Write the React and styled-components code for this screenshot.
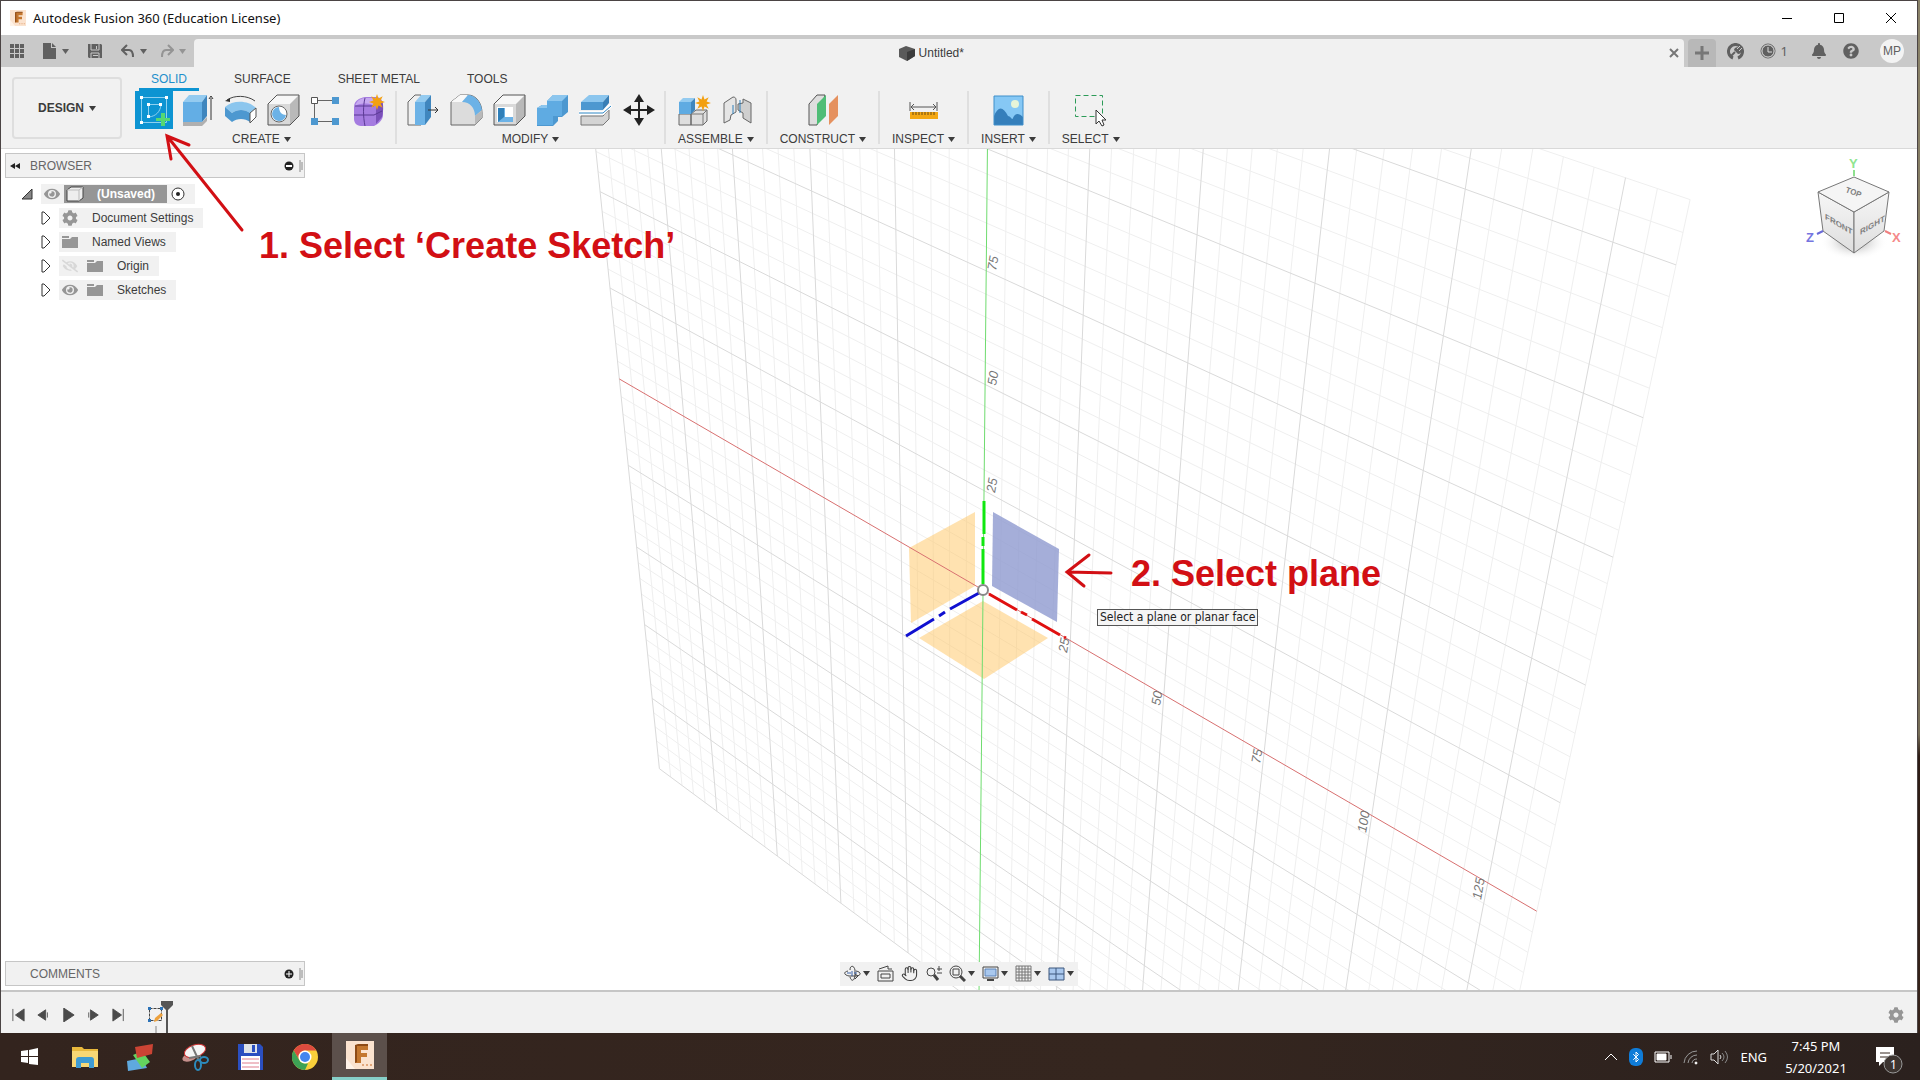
import React from 'react'
import styled, { createGlobalStyle } from 'styled-components'
import { Bluetooth, Hand } from 'lucide-react'
import { FaBell, FaCog, FaEye, FaEyeSlash, FaQuestionCircle } from 'react-icons/fa'

const colors = {
  chrome: '#f1f1f1',
  tabBar: '#c9c9c9',
  icon: '#606060',
  text: '#3c3c3c',
  accent: '#0d94d2',
  blue: '#6cb2e6',
  blueDark: '#4d98d0',
  note: '#d20f14',
}

const uiFont = '"Liberation Sans", Arial, sans-serif'
const systemFont = '"Noto Sans", "Open Sans", sans-serif'

const GlobalStyle = createGlobalStyle`
  * {
    box-sizing: border-box;
  }
  body {
    margin: 0;
    font-family: ${uiFont};
    font-size: 12px;
    color: ${colors.text};
  }
  button {
    border: 0;
    padding: 0;
    background: none;
    font: inherit;
    color: inherit;
  }
  svg {
    display: block;
    flex: none;
  }
`

const Desktop = styled.div`
  position: relative;
  height: 100vh;
  display: flex;
  flex-direction: column;
  overflow: hidden;
  background: linear-gradient(#8a8268 0, #756c56 68%, #2e1c15 70%, #38251c 100%);
`
const Window = styled.div`
  flex: 1;
  min-height: 0;
  display: flex;
  flex-direction: column;
  margin-right: 2px;
  border: 1px solid #4b4444;
  border-bottom: 0;
  background: #fff;
`
const TitleBar = styled.header`
  display: flex;
  align-items: center;
  height: 34px;
  padding: 0 20px 0 9px;
  gap: 7px;
  color: #111;
`
const Title = styled.h1`
  flex: 1;
  margin: 0;
  font: 400 13px ${systemFont};
`
const WindowButtons = styled.div`
  display: flex;
  gap: 40px;
`
const TabBar = styled.div`
  display: flex;
  height: 32px;
  background: ${colors.tabBar};
`
const QuickBar = styled.div`
  display: flex;
  align-items: center;
  width: 193px;
  padding-left: 9px;
  color: ${colors.icon};
`
const QuickButton = styled.button`
  display: flex;
  align-items: center;
  gap: 5px;
  margin-right: ${(props) => props.$after || 18}px;
  opacity: ${(props) => (props.$dim ? 0.5 : 1)};
`
const DocumentTab = styled.div`
  flex: 1;
  display: flex;
  align-items: center;
  margin-top: 4px;
  padding-right: 5px;
  border-radius: 4px 4px 0 0;
  background: ${colors.chrome};
`
const DocumentName = styled.div`
  flex: 1;
  display: flex;
  justify-content: center;
  align-items: center;
  gap: 4px;
  font-size: 12px;
`
const NewTab = styled.button`
  display: grid;
  place-items: center;
  width: 28px;
  margin: 4px 0 0 4px;
  border-radius: 4px 4px 0 0;
  background: #b8b8b8;
  color: #777;
`
const AccountBar = styled.div`
  display: flex;
  align-items: center;
  padding: 0 13px 0 11px;
  color: ${colors.icon};
`
const AccountButton = styled.button`
  display: flex;
  align-items: center;
  gap: 4px;
  margin-right: ${(props) => props.$after || 16}px;
  font: 13px ${systemFont};
`
const Avatar = styled.button`
  width: 24px;
  height: 24px;
  border-radius: 50%;
  background: #f3f3f3;
`
const Ribbon = styled.div`
  display: flex;
  height: 82px;
  border-bottom: 1px solid #d9d9d9;
  background: ${colors.chrome};
`
const WorkspaceButton = styled.button`
  display: flex;
  justify-content: center;
  align-items: center;
  gap: 5px;
  width: 110px;
  height: 62px;
  margin: 10px 13px 0 11px;
  border: 2px solid #dedede;
  border-radius: 4px;
  font-weight: 700;
`
const RibbonMain = styled.div`
  flex: 1;
`
const RibbonTabs = styled.nav`
  display: flex;
  gap: 23px;
  height: 24px;
  padding-left: 4px;
`
const RibbonTab = styled.button`
  height: 24px;
  padding: 2px 12px 0;
  border-bottom: 3px solid ${(props) => (props.$active ? colors.accent : 'transparent')};
  color: ${(props) => (props.$active ? '#1e8fcb' : colors.text)};
`
const Groups = styled.div`
  display: flex;
`
const Group = styled.section`
  display: flex;
  flex-direction: column;
  align-items: center;
  padding: 0 7px;
  height: 53px;
  border-right: ${(props) => (props.$last ? 0 : 2)}px solid #dfdfdf;

  &:first-child {
    padding-left: 0;
  }
`
const Tools = styled.div`
  display: flex;
  gap: 5px;
`
const Tool = styled.button`
  display: grid;
  place-items: center;
  width: 38px;
  height: 38px;
  background: ${(props) => (props.$active ? colors.accent : 'transparent')};
`
const GroupLabel = styled.button`
  display: flex;
  align-items: center;
  gap: 4px;
  height: 18px;
  margin-top: 1px;
  padding: 2px 5px 0;
  white-space: nowrap;
`
const Canvas = styled.main`
  position: relative;
  flex: 1;
  min-height: 0;
  display: flex;
  flex-direction: column;
  justify-content: space-between;
  overflow: hidden;
`
const Scene = styled.svg`
  position: absolute;
  inset: 0;
  width: 100%;
  height: 100%;
`
const Panel = styled.aside`
  position: relative;
  width: 300px;
  margin: 4px;
`
const PanelHeader = styled.div`
  display: flex;
  align-items: center;
  height: 25px;
  padding: 0 1px 0 3px;
  border: 1px solid #c6c6c6;
  background: ${colors.chrome};
  color: #666;
`
const PanelTitle = styled.span`
  flex: 1;
  padding-left: ${(props) => (props.$indent ? 21 : 9)}px;
`
const Tree = styled.ul`
  display: flex;
  flex-direction: column;
  gap: 4px;
  margin: 6px 0 0;
  padding: 0;
  list-style: none;
`
const TreeRow = styled.li`
  display: flex;
  align-items: center;
  gap: 8px;
  padding-left: ${(props) => (props.$root ? 16 : 36)}px;
`
const TreeItem = styled.div`
  display: flex;
  align-items: center;
  gap: ${(props) => (props.$root ? 4 : 9)}px;
  height: 20px;
  padding: 0 10px 0 3px;
  background: ${colors.chrome};
  color: #969696;
`
const TreeLabel = styled.span`
  padding-left: 5px;
  color: ${colors.text};
`
const Selected = styled.strong`
  display: flex;
  align-items: center;
  gap: 13px;
  height: 18px;
  padding: 0 12px 0 2px;
  background: #969696;
  color: #fff;
`
const BottomRow = styled.div`
  position: relative;
  display: grid;
  grid-template-columns: 1fr auto 1fr;
  align-items: center;
`
const NavBar = styled.div`
  display: flex;
  align-items: center;
  gap: 7px;
  height: 24px;
  padding: 0 4px;
  background: ${colors.chrome};
`
const NavButton = styled.button`
  display: flex;
  align-items: center;
  gap: 2px;
`
const Timeline = styled.div`
  display: flex;
  align-items: center;
  height: 43px;
  padding: 0 13px 0 11px;
  border-top: 2px solid #c6c6c6;
  background: ${colors.chrome};
  color: #4a4a4a;
`
const Playback = styled.div`
  flex: 1;
  display: flex;
  align-items: center;
  gap: 12px;
`
const PlayButton = styled.button`
  padding-top: 5px;
`
const Taskbar = styled.footer`
  display: flex;
  justify-content: space-between;
  height: 47px;
  background: linear-gradient(90deg, #33241e, #35261f 60%, #2b211e);
  color: #fff;
  font-family: ${systemFont};
`
const TaskGroup = styled.div`
  display: flex;
  align-items: center;
  padding-left: 2px;
`
const TaskButton = styled.button`
  display: grid;
  place-items: center;
  width: 55px;
  height: 47px;
  border-bottom: ${(props) => (props.$active ? '3px solid #86cfc8' : 0)};
  background: ${(props) => (props.$active ? '#5c504b' : 'transparent')};
`
const Tray = styled.div`
  display: flex;
  align-items: center;
  gap: 11px;
  padding-right: 11px;
  font-size: 13px;
`
const Clock = styled.time`
  width: 76px;
  text-align: center;
  line-height: 22px;
`
const Notes = styled.svg`
  position: absolute;
  inset: 0;
  width: 100%;
  height: 100%;
  pointer-events: none;
  fill: none;
  stroke: ${colors.note};
  stroke-width: 3;
  stroke-linecap: round;

  text {
    fill: ${colors.note};
    stroke: none;
    font: 700 36px ${uiFont};
  }
`

const Caret = ({ color = 'currentColor' }) => (
  <svg width='7' height='5' viewBox='0 0 7 5'>
    <path d='M0 0h7L3.5 5z' fill={color} />
  </svg>
)

const FusionLogo = ({ size }) => (
  <svg width={size} height={size} viewBox='0 0 28 28'>
    <rect width='28' height='28' fill='#fbe3cf' />
    <path d='M0 28V17l9 11z' fill='#fff3e8' />
    <path d='M9 4h13v5h-7v3h6v4h-6v6H9z' fill='#c4772f' />
    <path d='M9 4l3-1h10v2H11v16l-2 1z' fill='#8e4b16' />
    <path d='M16 24h2M20 24h2M24 24h2' stroke='#e2a77b' strokeWidth='2' />
  </svg>
)

// Isometric block shared by several of the modelling tools
const Block = ({ front = '#d9d9d9', top = '#f7f7f7', side = '#b9b9b9', stroke = '#555' }) => (
  <g stroke={stroke} strokeLinejoin='round'>
    <path d='M1 10h22v21H1z' fill={front} stroke='none' />
    <path d='M1 10L10 1h22l-9 9z' fill={top} stroke='none' />
    <path d='M23 10l9-9v21l-9 9z' fill={side} stroke='none' />
    <path d='M1 10L10 1h22v21l-9 9H1z' fill='none' />
  </g>
)

const Icon = ({ children, size = 33 }) => (
  <svg width={size} height={size} viewBox='0 0 33 33' fill='none'>
    {children}
  </svg>
)

const Burst = ({ x, y }) => (
  <path
    transform={`translate(${x} ${y})`}
    d='M0-8l1.5 4.4L5.7-5.7 3.6-1.5 8 0 3.6 1.5l2.1 4.2-4.2-2.1L0 8l-1.5-4.4-4.2 2.1 2.1-4.2L-8 0l4.4-1.5-2.1-4.2 4.2 2.1z'
    fill='#f3a010'
  />
)

const SketchIcon = () => (
  <Icon>
    <path d='M3.500 3.500h25v25h-25zM10.500 10.500h12M10.500 10.500v12M23 11c-1 7-5 11-12 12' stroke='#8fd0f0' />
    <path d='M2 2h3v3H2zM27 2h3v3h-3zM2 27h3v3H2zM9 9h3v3H9zM21 9h3v3h-3zM9 21h3v3H9z' fill='#fff' />
    <path d='M23 19h4v5h5v3h-5v5h-4v-5h-5v-3h5z' fill='#55d873' />
  </Icon>
)
const ExtrudeIcon = () => (
  <Icon>
    <path d='M2 28h19l5-5v4l-5 5H2z' fill='#b0b0b0' />
    <path d='M2 8h19v20H2z' fill='#63aee5' />
    <path d='M2 8l6-7h18l-5 7z' fill='#94cbf0' />
    <path d='M21 8l5-7v21l-5 6z' fill='#3f86be' />
    <path d='M30 26V4M28 5l2-3 2 3' stroke='#333' />
  </Icon>
)
const RevolveIcon = () => (
  <Icon>
    <path d='M3 6C10 1 23 1 31 7' stroke='#444' />
    <path d='M1 7l5-3v4z' fill='#333' />
    <path d='M1 13c8-7 23-7 31 1l-6 5c-5-4-13-4-18 0z' fill='#8cc6ee' />
    <path d='M1 13l7 6v9l-7-6zM8 19c5-4 13-4 18 0v9c-5-4-13-4-18 0z' fill={colors.blueDark} />
    <path d='M26 19l6-5v9l-6 6z' fill='#fff' stroke='#555' />
  </Icon>
)
const HoleIcon = () => (
  <Icon>
    <Block />
    <circle cx='12' cy='20' r='8' fill='#fff' stroke='#666' />
    <path d='M12 13a7 7 0 1 0 7 8c-4 0-7-3-7-8z' fill={colors.blue} />
  </Icon>
)
const PatternIcon = () => (
  <Icon>
    <path d='M4.500 9v16M8 6.500h16M8 27.500h16' stroke='#666' />
    <path d='M1.500 3.500h6v6h-6z' fill='#fff' stroke='#555' />
    <path d='M22 3h7v7h-7zM1 24h7v7H1zM22 24h7v7h-7z' fill={colors.blueDark} />
  </Icon>
)
const FormIcon = () => (
  <Icon>
    <path d='M1 13c0-6 5-9 11-10h11c5 0 7 4 7 9v9c0 4-4 9-9 11H8c-5 0-7-4-7-7z' fill='#a57ce0' />
    <path d='M2 12c2-6 6-8 11-8h10l-3 7c-7-2-12-2-18 1z' fill='#c6a9f0' />
    <path d='M23 11l6-4c2 5 1 12 0 16l-6 7z' fill='#7a50b8' />
    <path d='M1 21h20l8-4M12 4c-2 8-2 18 0 28M2 12h19' stroke='#5b3a94' />
    <Burst x='24' y='8' />
  </Icon>
)
const PressPullIcon = () => (
  <Icon>
    <path d='M1 8l7-7h6v30H1z' fill='#efefef' stroke='#666' />
    <path d='M8 8h10v23H8z' fill={colors.blue} />
    <path d='M8 8l6-7h10l-6 7z' fill='#94cbf0' />
    <path d='M18 8l6-7v22l-6 8z' fill='#3f86be' />
    <path d='M21 16h10M28 13l3 3-3 3' stroke='#333' />
  </Icon>
)
const FilletIcon = () => (
  <Icon>
    <path d='M1 8l9-7h8c8 0 14 8 14 18v5l-7 7H1z' fill='#dcdcdc' stroke='#666' />
    <path d='M1 8l9-7h8l-6 7z' fill='#f8f8f8' />
    <path d='M12 8l6-7c7 0 13 7 14 15l-7 6c0-8-5-14-13-14z' fill={colors.blue} />
    <path d='M25 22l7-6v8l-7 7z' fill='#b9b9b9' />
  </Icon>
)
const ShellIcon = () => (
  <Icon>
    <Block />
    <path d='M4 13h16v15H4z' fill='#fff' />
    <path d='M5 14h7v9h8v5H5z' fill={colors.blue} />
    <path d='M5 14l6 0v9l-6 5z' fill='#2f7fb9' />
  </Icon>
)
const CombineIcon = () => (
  <Icon>
    <path d='M1 14l5-3h5V7l6-6h15v17l-6 5h-4v4l-5 5H1z' fill={colors.blueDark} />
    <path d='M1 14h10V7h15v15H17v9H1z' fill='#5fabe2' />
    <path d='M11 7l6-6h15l-6 6zM1 14l5-3h5v3z' fill='#8cc6ee' />
  </Icon>
)
const SplitIcon = () => (
  <Icon>
    <path d='M2 8l8-7h20l-6 7z' fill='#8cc6ee' />
    <path d='M2 8h22v8H2z' fill={colors.blueDark} />
    <path d='M24 8l6-7v8l-6 7z' fill='#397fb6' />
    <path d='M2 22h22l6-6v9l-6 6H2z' fill='#d4d4d4' stroke='#777' />
    <path d='M0 19h24l8-8' stroke='#fff' strokeWidth='4' />
    <path d='M0 19h24l8-7' stroke='#2f87c4' />
  </Icon>
)
const MoveIcon = () => (
  <Icon>
    <path d='M17 5v22M6 16h22' stroke='#222' strokeWidth='2' />
    <path d='M17 0l5 8H12zM17 32l5-8H12zM1 16l8-5v10zM33 16l-8-5v10z' fill='#222' />
  </Icon>
)
const ComponentIcon = () => (
  <Icon>
    <path d='M1 20h12v11H1zM13 20l5-4h11v11l-4 4H13z' fill='#dedede' stroke='#666' />
    <path d='M13 20h12v11M25 20l4-4' stroke='#777' />
    <path d='M1 8h12v12H1z' fill='#5fabe2' />
    <path d='M1 8l4-4h12l-4 4z' fill='#94cbf0' />
    <path d='M13 8l4-4v12l-4 4z' fill='#3f86be' />
    <Burst x='25' y='9' />
  </Icon>
)
const JointIcon = () => (
  <Icon>
    <path d='M3 9l9-6c2 0 3 1 3 3v12l-5 3-1 5-6 3z' fill='#e5e5e5' stroke='#666' />
    <path d='M30 29l-8-5v-5l-5-3v-6l5-1V5l8 4z' fill='#cfcfcf' stroke='#666' />
    <path d='M12 20v-9M19 19V6' stroke='#2f7fb9' />
  </Icon>
)
const ConstructIcon = () => (
  <Icon>
    <path d='M3 10l8-9h8L11 31H3z' fill='#dedede' stroke='#555' />
    <path d='M11 10l9-9v21l-9 9z' fill='#4fbd76' />
    <path d='M23 10l9-9v21l-9 9z' fill='#e5915f' />
  </Icon>
)
const InspectIcon = () => (
  <Icon>
    <path d='M3 8v9M30 8v9M4 13h25M7 10l-3 3 3 3M26 10l3 3-3 3' stroke='#555' />
    <path d='M3 18h28v7H3z' fill='#f3a712' />
    <path d='M6 18v3M9 18v3M12 18v3M15 18v3M18 18v3M21 18v3M24 18v3M27 18v3' stroke='#6b4b10' />
  </Icon>
)
const InsertIcon = () => (
  <Icon>
    <path d='M2 2h29v29H2z' fill='#86c8f5' />
    <path d='M2 22c4-10 9-10 14 0 3 0 4 5 5 2 2-5 6-5 10-1v8H2z' fill='#357fbb' />
    <circle cx='23' cy='10' r='4' fill='#e7f5d9' />
    <path d='M2 2h29v29H2z' stroke='#3f8fca' />
  </Icon>
)
const SelectIcon = () => (
  <Icon>
    <path d='M1.500 1.500h27v21h-27z' stroke='#2d9b58' strokeDasharray='5 3' />
    <path d='M22 16v14l3-3 3 5 2-1-2-5h4z' fill='#fff' stroke='#333' />
  </Icon>
)

const groups = [
  {
    label: 'CREATE',
    tools: [
      ['Create Sketch', SketchIcon],
      ['Extrude', ExtrudeIcon],
      ['Revolve', RevolveIcon],
      ['Hole', HoleIcon],
      ['Pattern', PatternIcon],
      ['Create Form', FormIcon],
    ],
  },
  {
    label: 'MODIFY',
    tools: [
      ['Press Pull', PressPullIcon],
      ['Fillet', FilletIcon],
      ['Shell', ShellIcon],
      ['Combine', CombineIcon],
      ['Split Body', SplitIcon],
      ['Move', MoveIcon],
    ],
  },
  {
    label: 'ASSEMBLE',
    tools: [
      ['New Component', ComponentIcon],
      ['Joint', JointIcon],
    ],
  },
  { label: 'CONSTRUCT', tools: [['Offset Plane', ConstructIcon]] },
  { label: 'INSPECT', tools: [['Measure', InspectIcon]] },
  { label: 'INSERT', tools: [['Insert Image', InsertIcon]] },
  { label: 'SELECT', tools: [['Select', SelectIcon]] },
]

const UndoArrow = ({ flip }) => (
  <svg width='14' height='14' viewBox='0 0 14 14' fill='none' stroke='currentColor' strokeWidth='2'>
    <g transform={flip ? 'translate(14 0) scale(-1 1)' : undefined}>
      <path d='M1 6h7c3 0 4 2 4 7M6 1L1 6l5 5' />
    </g>
  </svg>
)

const FolderIcon = () => (
  <svg width='16' height='14' viewBox='0 0 16 14' fill='currentColor'>
    <path d='M0 1h7v2H0zM0 4h8l2-2h6v11H0z' />
  </svg>
)

const Expander = () => (
  <svg width='10' height='14' viewBox='0 0 10 14'>
    <path d='M1 1h2l6 6-6 6H1z' fill='#fff' stroke='#333' />
  </svg>
)

const Grip = () => (
  <svg width='4' height='12' viewBox='0 0 4 12'>
    <path d='M1 0v12M3 2v8' stroke='#888' />
  </svg>
)

// Ground grid, projected with a fixed camera
const gridMin = -125
const gridMax = 135
const project = (x, y) => {
  const w = 1 - 0.0013 * x - 0.00127 * y
  return [(983 + 2.104 * x - 1.21 * y) / w, (590 + 1.195 * x - 4.6 * y) / w]
}
const segment = (from, to) => {
  const [x1, y1] = project(...from)
  const [x2, y2] = project(...to)
  return `M${x1.toFixed(1)} ${y1.toFixed(1)}L${x2.toFixed(1)} ${y2.toFixed(1)}`
}
const steps = []
for (let i = gridMin; i <= gridMax; i += 5) steps.push(i)
const gridPath = (list) =>
  list.map((i) => segment([i, gridMin], [i, gridMax]) + segment([gridMin, i], [gridMax, i])).join('')
const minorGrid = gridPath(steps.filter((i) => i % 25 !== 0))
const majorGrid = gridPath(steps.filter((i) => i % 25 === 0 && i !== 0))

const gridLabels = [
  ['25', 995, 493],
  ['50', 996, 386],
  ['75', 996, 271],
  ['25', 1067, 653],
  ['50', 1160, 706],
  ['75', 1260, 764],
  ['100', 1366, 833],
  ['125', 1481, 900],
]

function Viewport() {
  return (
    <Scene viewBox='1 149 1916 841' preserveAspectRatio='xMidYMid slice' fill='none'>
      <defs>
        <linearGradient id='cubeFace' x1='0' y1='0' x2='0' y2='1'>
          <stop offset='0' stopColor='#f6f6f6' />
          <stop offset='1' stopColor='#dedede' />
        </linearGradient>
        <radialGradient id='cubeShadow'>
          <stop offset='0' stopColor='#999' />
          <stop offset='1' stopColor='#fff' stopOpacity='0' />
        </radialGradient>
      </defs>
      <path d={minorGrid} stroke='#efefef' />
      <path d={majorGrid} stroke='#dadada' />
      <g fill='#ffc868' fillOpacity='0.52'>
        <path d='M975 512L909 548L911 623L975 586z' />
        <path d='M983 601L1048 638L984 679L919 638z' />
      </g>
      <path d='M993 512L1059 549L1057 622L992 586z' fill='#8f9ad0' fillOpacity='0.8' />
      <path d={segment([gridMin, 0], [gridMax, 0])} stroke='#d87070' />
      <path d={segment([0, gridMin], [0, gridMax])} stroke='#6fdc6f' />
      <g strokeWidth='3'>
        <path d='M984 501V534M983 537V546M983 549V584' stroke='#10e810' />
        <path d='M979 593L950 609M945 612L939 616M934 619L906 636' stroke='#1010d0' />
        <path d='M989 594L1017 610M1021 612L1027 615M1032 619L1060 635M1064 637L1066 638' stroke='#e01010' />
      </g>
      <circle cx='983' cy='590' r='5' fill='#fff' stroke='#888' strokeWidth='2' />
      <g fill='#777' fontFamily='Liberation Sans, sans-serif' fontSize='13' fontStyle='italic'>
        {gridLabels.map(([text, x, y]) => (
          <text key={`${text}-${x}`} transform={`translate(${x} ${y}) rotate(-80)`}>
            {text}
          </text>
        ))}
      </g>
      <ellipse cx='1854' cy='242' rx='34' ry='18' fill='url(#cubeShadow)' />
      <g stroke='#777' fill='url(#cubeFace)'>
        <path d='M1818 192L1854 212V253L1823 231z' />
        <path d='M1889 192L1854 212V253L1884 231z' />
        <path d='M1854 177L1889 192L1854 212L1818 192z' fill='#f5f5f5' />
      </g>
      <g fill='#808080' fontFamily='Liberation Sans, sans-serif' fontSize='8' fontWeight='700'>
        <text transform='translate(1825 219) skewY(30)'>FRONT</text>
        <text transform='translate(1860 235) skewY(-30)'>RIGHT</text>
        <text transform='translate(1845 192) rotate(20)'>TOP</text>
      </g>
      <g strokeWidth='2'>
        <path d='M1854 170V176' stroke='#8ee08e' />
        <path d='M1817 234L1823 231' stroke='#6a6ad8' />
        <path d='M1885 231L1891 234' stroke='#f08080' />
      </g>
      <g fontFamily='Liberation Sans, sans-serif' fontSize='13' fontWeight='700'>
        <text x='1849' y='168' fill='#8fe58f'>Y</text>
        <text x='1806' y='242' fill='#7575e0'>Z</text>
        <text x='1892' y='242' fill='#f58a8a'>X</text>
      </g>
    </Scene>
  )
}

const Tooltip = styled.div`
  position: absolute;
  left: 1096px;
  top: 460px;
  height: 17px;
  padding: 0 2px;
  border: 1px solid #555;
  background: #f5f5f5;
  color: #222;
  font: 12px/15px 'DejaVu Sans Condensed', 'DejaVu Sans', sans-serif;
  white-space: nowrap;
`

const NavIcon = ({ children }) => (
  <svg width='17' height='17' viewBox='0 0 17 17' fill='none' stroke='#444'>
    {children}
  </svg>
)

const navTools = [
  ['Orbit', true, (
    <NavIcon>
      <path d='M6 5c0-5 4-5 5 0v6c-1 6-4 5-5 1M12 6c6 1 5 5 0 5H5C0 10-1 7 4 6M11 9l3 2-3 3' />
      <path d='M3 8h4M8 6v5M10 8h3' stroke='#3a62a8' />
    </NavIcon>
  )],
  ['Look At', false, (
    <NavIcon>
      <path d='M1 6h15v10H1zM4 9h9v4H4zM2 4l9-3v3h4' />
    </NavIcon>
  )],
  ['Pan', false, <Hand size={17} strokeWidth={1.5} />],
  ['Zoom', false, (
    <NavIcon>
      <circle cx='6' cy='7' r='4' />
      <path d='M9 10l4 5' strokeWidth='3' />
      <path d='M12 4h5M14 1v5M12 8h5' />
    </NavIcon>
  )],
  ['Fit', true, (
    <NavIcon>
      <circle cx='7' cy='7' r='6' />
      <path d='M4 4h6v6H4z' />
      <path d='M11 11l5 5' strokeWidth='3' />
    </NavIcon>
  )],
  ['Display Settings', true, (
    <NavIcon>
      <path d='M1 2h15v11H1z' />
      <path d='M3 4h11v7H3z' fill='#a9c8ee' stroke='#5b82b8' />
      <path d='M5 15h7' strokeWidth='2' />
    </NavIcon>
  )],
  ['Grid and Snaps', true, (
    <NavIcon>
      <path d='M1 1h15v15H1zM4 1v15M7 1v15M10 1v15M13 1v15M1 4h15M1 7h15M1 10h15M1 13h15' stroke='#777' />
    </NavIcon>
  )],
  ['Viewports', true, (
    <NavIcon>
      <path d='M1 3h15v12H1zM8 3v12M1 9h15' fill='#a9c8ee' stroke='#3d567c' />
    </NavIcon>
  )],
]

const playbackIcons = [
  ['To start', 'M1 1v14M14 1v14L4 8z'],
  ['Step back', 'M12 5v6M10 2v12L1 8z'],
  ['Play', 'M2 0v16l12-8z'],
  ['Step forward', 'M2 5v6M4 2v12l9-6z'],
  ['To end', 'M13 1v14M1 1v14l10-7z'],
]

const WindowsIcon = () => (
  <svg width='17' height='17' viewBox='0 0 17 17' fill='#fff'>
    <path d='M0 3l7-1v6H0zM8 2l9-2v8H8zM0 9h7v6l-7-1zM8 9h9v8l-9-1z' />
  </svg>
)
const ExplorerIcon = () => (
  <svg width='26' height='22' viewBox='0 0 26 22'>
    <path d='M0 1h10l2 2h14v18H0z' fill='#e9b83c' />
    <path d='M0 5h26v16H0z' fill='#f8d775' />
    <path d='M4 22v-8q0-3 3-3h12q3 0 3 3v8h-5v-5H9v5z' fill='#3e9bd3' />
  </svg>
)
const CardsIcon = () => (
  <svg width='28' height='28' viewBox='0 0 28 28'>
    <path d='M1 18l15-3 5 10-19 3z' fill='#5fa9de' />
    <path d='M7 12l9-4 8 11-8 6z' fill='#63d35e' />
    <path d='M9 4l18-3-1 10-15 4z' fill='#cb4434' />
  </svg>
)
const SnipIcon = () => (
  <svg width='28' height='28' viewBox='0 0 28 28' fill='none'>
    <ellipse cx='9' cy='14' rx='8' ry='4' fill='#c6908c' transform='rotate(-20 9 14)' />
    <ellipse cx='14' cy='8' rx='11' ry='6' fill='#f5f5f5' stroke='#c33' transform='rotate(-18 14 8)' />
    <path d='M11 3l7 15M8 15l12-2' stroke='#777' strokeWidth='2' />
    <ellipse cx='17' cy='22' rx='3' ry='5' stroke='#2c8bbd' strokeWidth='2' />
    <ellipse cx='23' cy='17' rx='4' ry='3' stroke='#2c8bbd' strokeWidth='2' />
  </svg>
)
const FloppyIcon = () => (
  <svg width='26' height='26' viewBox='0 0 26 26'>
    <path d='M1 0h22l3 3v23H1z' fill='#2b4fc0' />
    <path d='M7 0h13v9H7z' fill='#dfe3e8' />
    <path d='M15 1h3v7h-3z' fill='#2b4fc0' />
    <path d='M4 12h19v14H4z' fill='#fff' />
    <path d='M5 15h17M5 19h17M5 23h17' stroke='#df7f8c' />
  </svg>
)
const ChromeIcon = () => (
  <svg width='26' height='26' viewBox='0 0 26 26'>
    <circle cx='13' cy='13' r='13' fill='#f9cf3a' />
    <path d='M1.7 6.5A13 13 0 0 1 24.3 6.5H13a6.5 6.5 0 0 0-5.6 9.7z' fill='#dd4b3e' />
    <path d='M1.7 6.5L7.4 16.3A6.5 6.5 0 0 0 13 19.5h3L13 26A13 13 0 0 1 1.7 6.5z' fill='#3da255' />
    <circle cx='13' cy='13' r='6.5' fill='#fff' />
    <circle cx='13' cy='13' r='5' fill='#4386ee' />
  </svg>
)

const taskIcons = [
  ['File Explorer', <ExplorerIcon />],
  ['Solitaire', <CardsIcon />],
  ['Snipping Tool', <SnipIcon />],
  ['Commander', <FloppyIcon />],
  ['Chrome', <ChromeIcon />],
  ['Fusion 360', <FusionLogo size={28} />],
]

export default function App() {
  return (
    <Desktop>
      <GlobalStyle />
      <Window>
        <TitleBar>
          <FusionLogo size={16} />
          <Title>Autodesk Fusion 360 (Education License)</Title>
          <WindowButtons>
            <button aria-label='Minimize'>
              <svg width='12' height='12' stroke='#000'><path d='M1 6.5h10' /></svg>
            </button>
            <button aria-label='Maximize'>
              <svg width='12' height='12' stroke='#000' fill='none'><path d='M1.5 1.5h9v9h-9z' /></svg>
            </button>
            <button aria-label='Close'>
              <svg width='12' height='12' stroke='#000'><path d='M1 1l10 10M11 1L1 11' /></svg>
            </button>
          </WindowButtons>
        </TitleBar>

        <TabBar>
          <QuickBar>
            <QuickButton aria-label='Data panel'>
              <svg width='15' height='15' viewBox='0 0 15 15' fill='currentColor'>
                <path d='M0 0h4v4H0zM5 0h4v4H5zM10 0h4v4h-4zM0 5h4v4H0zM5 5h4v4H5zM10 5h4v4h-4zM0 10h4v4H0zM5 10h4v4H5zM10 10h4v4h-4z' />
              </svg>
            </QuickButton>
            <QuickButton aria-label='File' $after='19'>
              <svg width='14' height='16' viewBox='0 0 14 16' fill='currentColor'>
                <path d='M0 0h8v5h5v11H0zM9 0l4 4H9z' />
              </svg>
              <Caret />
            </QuickButton>
            <QuickButton aria-label='Save'>
              <svg width='15' height='15' viewBox='0 0 15 15'>
                <path d='M0 0h13l1 1v13H1l-1-1z' fill='currentColor' />
                <path d='M3 0v6h8V0M3 14V9h8v5' fill='none' stroke='#c9c9c9' />
                <path d='M8 2h1v3H8zM5 11h5v1H5z' fill='#c9c9c9' />
              </svg>
            </QuickButton>
            <QuickButton aria-label='Undo' $after='13'>
              <UndoArrow />
              <Caret />
            </QuickButton>
            <QuickButton aria-label='Redo' $dim>
              <UndoArrow flip />
              <Caret />
            </QuickButton>
          </QuickBar>
          <DocumentTab>
            <DocumentName>
              <svg width='16' height='15' viewBox='0 0 16 15'>
                <path d='M0 3l7-3 9 3v7l-8 5-8-4z' fill='#5a5a5a' />
                <path d='M8 6l8-3v7l-8 5z' fill='#3c3c3c' />
              </svg>
              Untitled*
            </DocumentName>
            <button aria-label='Close tab'>
              <svg width='10' height='10' stroke='#777' strokeWidth='2'><path d='M1 1l8 8M9 1L1 9' /></svg>
            </button>
          </DocumentTab>
          <NewTab aria-label='New tab'>
            <svg width='14' height='14' stroke='#777' strokeWidth='3'><path d='M7 0v14M0 7h14' /></svg>
          </NewTab>
          <AccountBar>
            <AccountButton aria-label='Extensions'>
              <svg width='17' height='17' viewBox='0 0 17 17' fill='none' stroke='currentColor'>
                <path d='M6 15a7 7 0 1 1 5 0' strokeWidth='3' />
                <path d='M4 13l4-4' strokeWidth='2' />
                <path d='M7 7l4 4c2 0 4-2 4-4l-3-3c-3 0-5 1-5 3z' fill='currentColor' stroke='none' />
                <path d='M10 6l3-3M12 8l3-3' stroke='#c9c9c9' />
              </svg>
            </AccountButton>
            <AccountButton aria-label='Job status' $after='23'>
              <svg width='17' height='17' viewBox='0 0 17 17' fill='none'>
                <circle cx='8' cy='8' r='7' stroke='currentColor' />
                <circle cx='8' cy='8' r='6' fill='currentColor' stroke='#c9c9c9' />
                <path d='M8 4v5h4' stroke='#ddd' />
              </svg>
              1
            </AccountButton>
            <AccountButton aria-label='Notifications'>
              <FaBell size={16} />
            </AccountButton>
            <AccountButton aria-label='Help' $after='21'>
              <FaQuestionCircle size={16} />
            </AccountButton>
            <Avatar>MP</Avatar>
          </AccountBar>
        </TabBar>

        <Ribbon>
          <WorkspaceButton>
            DESIGN <Caret />
          </WorkspaceButton>
          <RibbonMain>
            <RibbonTabs>
              <RibbonTab $active>SOLID</RibbonTab>
              <RibbonTab>SURFACE</RibbonTab>
              <RibbonTab>SHEET METAL</RibbonTab>
              <RibbonTab>TOOLS</RibbonTab>
            </RibbonTabs>
            <Groups>
              {groups.map((group) => (
                <Group key={group.label} $last={group.label === 'SELECT'}>
                  <Tools>
                    {group.tools.map(([name, ToolIcon]) => (
                      <Tool key={name} aria-label={name} $active={name === 'Create Sketch'}>
                        <ToolIcon />
                      </Tool>
                    ))}
                  </Tools>
                  <GroupLabel>
                    {group.label} <Caret />
                  </GroupLabel>
                </Group>
              ))}
            </Groups>
          </RibbonMain>
        </Ribbon>

        <Canvas>
          <Viewport />
          <Panel>
            <PanelHeader>
              <svg width='12' height='8' viewBox='0 0 12 8' fill='#222'><path d='M6 1v6L1 4zM11 1v6L6 4z' /></svg>
              <PanelTitle>BROWSER</PanelTitle>
              <button aria-label='Collapse browser'>
                <svg width='15' height='10' viewBox='0 0 15 10'>
                  <circle cx='5' cy='5' r='4.5' fill='#222' />
                  <path d='M2 5h6' stroke='#fff' strokeWidth='2' />
                </svg>
              </button>
              <Grip />
            </PanelHeader>
            <Tree>
              <TreeRow $root>
                <svg width='12' height='12' viewBox='0 0 12 12'><path d='M11 1v10H1z' fill='#888' stroke='#333' /></svg>
                <TreeItem $root>
                  <FaEye size={16} />
                  <Selected>
                    <svg width='18' height='16' viewBox='0 0 18 16'>
                      <path d='M1 4l4-3h12v11l-4 3H1z' fill='#eee' stroke='#444' />
                      <path d='M1 4h12v11M13 4l4-3' fill='none' stroke='#bbb' />
                    </svg>
                    (Unsaved)
                  </Selected>
                  <svg width='14' height='14' viewBox='0 0 14 14'>
                    <circle cx='7' cy='7' r='6' fill='#fff' stroke='#333' />
                    <circle cx='7' cy='7' r='2' fill='#222' />
                  </svg>
                </TreeItem>
              </TreeRow>
              <TreeRow>
                <Expander />
                <TreeItem>
                  <FaCog size={16} />
                  <TreeLabel>Document Settings</TreeLabel>
                </TreeItem>
              </TreeRow>
              <TreeRow>
                <Expander />
                <TreeItem>
                  <FolderIcon />
                  <TreeLabel>Named Views</TreeLabel>
                </TreeItem>
              </TreeRow>
              <TreeRow>
                <Expander />
                <TreeItem>
                  <FaEyeSlash size={16} color='#d8d8d8' />
                  <FolderIcon />
                  <TreeLabel>Origin</TreeLabel>
                </TreeItem>
              </TreeRow>
              <TreeRow>
                <Expander />
                <TreeItem>
                  <FaEye size={16} />
                  <FolderIcon />
                  <TreeLabel>Sketches</TreeLabel>
                </TreeItem>
              </TreeRow>
            </Tree>
          </Panel>
          <Tooltip role='tooltip'>Select a plane or planar face</Tooltip>
          <BottomRow>
            <Panel>
              <PanelHeader>
                <PanelTitle $indent>COMMENTS</PanelTitle>
                <button aria-label='Expand comments'>
                  <svg width='15' height='10' viewBox='0 0 15 10'>
                    <circle cx='5' cy='5' r='4.5' fill='#222' />
                    <path d='M2 5h6M5 2v6' stroke='#fff' />
                  </svg>
                </button>
                <Grip />
              </PanelHeader>
            </Panel>
            <NavBar>
              {navTools.map(([name, hasMenu, icon]) => (
                <NavButton key={name} aria-label={name}>
                  {icon}
                  {hasMenu && <Caret />}
                </NavButton>
              ))}
            </NavBar>
          </BottomRow>
        </Canvas>

        <Timeline>
          <Playback>
            {playbackIcons.map(([name, d]) => (
              <PlayButton key={name} aria-label={name}>
                <svg width='13' height='14' viewBox='0 0 15 16'>
                  <path d={d} fill='currentColor' stroke='currentColor' />
                </svg>
              </PlayButton>
            ))}
            <svg width='36' height='41' viewBox='0 0 36 41'>
              <path d='M12.5 16.5h12v12h-12z' fill='none' stroke='#444' strokeDasharray='3 1' />
              <path d='M11 15h3v3h-3zM23 15h3v3h-3zM11 27h3v3h-3z' fill='#2c73b8' />
              <path d='M17 30l1-4 6-5 2 2-6 6z' fill='#eda13d' />
              <path d='M19 34v7' stroke='#bbb' strokeWidth='2' />
              <path d='M24 9h12v4l-5 5v23h-2V18l-5-5z' fill='#555' />
            </svg>
          </Playback>
          <PlayButton aria-label='Timeline settings'>
            <FaCog size={16} color='#969696' />
          </PlayButton>
        </Timeline>
      </Window>

      <Taskbar>
        <TaskGroup>
          <TaskButton aria-label='Start'>
            <WindowsIcon />
          </TaskButton>
          {taskIcons.map(([name, icon]) => (
            <TaskButton key={name} aria-label={name} $active={name === 'Fusion 360'}>
              {icon}
            </TaskButton>
          ))}
        </TaskGroup>
        <Tray>
          <svg width='14' height='9' viewBox='0 0 14 9' fill='none' stroke='#fff'><path d='M1 8l6-6 6 6' /></svg>
          <svg width='14' height='18' viewBox='0 0 14 18'>
            <rect width='14' height='18' rx='6' fill='#0f7cd8' />
            <Bluetooth x='1' y='3' width='12' height='12' color='#fff' />
          </svg>
          <svg width='18' height='12' viewBox='0 0 18 12' fill='none' stroke='#fff'>
            <path d='M1 1h14v10H1zM17 4v4' />
            <path d='M3 3h9v6H3z' fill='#fff' />
          </svg>
          <svg width='16' height='16' viewBox='0 0 16 16' fill='none' stroke='#999'>
            <path d='M1 14A13 13 0 0 1 14 2M5 14a9 9 0 0 1 9-8M9 14a5 5 0 0 1 5-4' />
            <circle cx='13' cy='14' r='1' fill='#fff' stroke='#fff' />
          </svg>
          <svg width='19' height='16' viewBox='0 0 19 16' fill='none' stroke='#ddd'>
            <path d='M1 5h3l4-4v14l-4-4H1zM10 6q2 2 0 4' />
            <path d='M12 4q4 4 0 8M15 2q5 6 0 12' stroke='#888' />
          </svg>
          <span>ENG</span>
          <Clock>
            7:45 PM
            <br />
            5/20/2021
          </Clock>
          <svg width='44' height='47' viewBox='0 0 44 47' fill='none'>
            <path d='M11 14h18v15H18l-4 4v-4h-3z' fill='#fff' />
            <path d='M15 20h10M15 24h10' stroke='#35261f' />
            <circle cx='28' cy='31' r='9' fill='#3c3430' stroke='#999' />
            <text x='25' y='36' fill='#fff' fontSize='12'>1</text>
          </svg>
        </Tray>
      </Taskbar>

      <Notes viewBox='0 0 1920 1080'>
        <path d='M242 230L167 136M189 145L167 136L171 159' />
        <path d='M1111 573L1067 572M1089 555L1067 572L1084 586' />
        <text x='259' y='258'>1. Select ‘Create Sketch’</text>
        <text x='1131' y='586'>2. Select plane</text>
      </Notes>
    </Desktop>
  )
}
